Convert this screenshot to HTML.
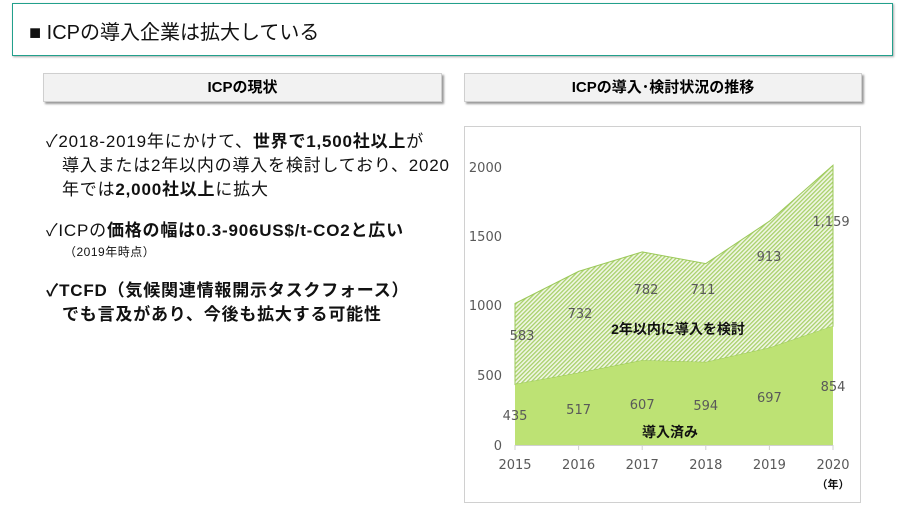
<!DOCTYPE html>
<html><head><meta charset="utf-8"><style>
body{margin:0;width:904px;height:512px;background:#fff;position:relative;overflow:hidden;font-family:"Liberation Sans","Noto Sans CJK JP",sans-serif;color:#000}
.title{position:absolute;left:12px;top:3px;width:879px;height:51px;border:1px solid #22a08c;box-shadow:1px 1px 2px #aaa}
.title span{position:absolute;left:16px;top:12px;font-size:20px;color:#111}
.hd{position:absolute;top:73px;height:27px;background:#f2f2f2;border:1px solid #cfcfcf;box-shadow:2px 2px 2px #999;font-weight:bold;font-size:15px;text-align:center;line-height:27px}
.txt{position:absolute;left:46px;font-size:17px;line-height:24px;color:#111;letter-spacing:0.8px;white-space:nowrap}
b{font-weight:bold}
</style></head><body>
<div class="title"><span>■ ICPの導入企業は拡大している</span></div>
<div class="hd" style="left:43px;width:397px">ICPの現状</div>
<div class="hd" style="left:464px;width:396px">ICPの導入･検討状況の推移</div>
<div class="txt" style="top:130px">✓2018-2019年にかけて、<b>世界で1,500社以上</b>が<br><span style="padding-left:16px">導入または2年以内の導入を検討しており、2020</span><br><span style="padding-left:16px">年では<b>2,000社以上</b>に拡大</span></div>
<div class="txt" style="top:219px">✓ICPの<b>価格の幅は0.3-906US$/t-CO2と広い</b></div>
<div class="txt" style="top:240px;font-size:12px;padding-left:18px;letter-spacing:0.5px">（2019年時点）</div>
<div class="txt" style="top:279px"><b>✓TCFD（気候関連情報開示タスクフォース）<br><span style="padding-left:16px">でも言及があり、今後も拡大する可能性</span></b></div>
<svg style="position:absolute;left:0;top:0" width="904" height="512">
<defs><pattern id="h" width="3" height="3" patternUnits="userSpaceOnUse" patternTransform="rotate(45)"><rect width="3" height="3" fill="#f0f6e4"/><rect width="1.3" height="3" fill="#a8d06a"/></pattern></defs>
<rect x="464.5" y="126.5" width="396" height="376" fill="#fff" stroke="#d0d0d0"/>
<polygon points="515,303.5 578.6,271.4 642.2,251.9 705.8,263.6 769.4,221.2 833,165.2 833,326.3 769.4,348.1 705.8,362.4 642.2,360.6 578.6,373.1 515,384.5" fill="url(#h)" stroke="#9cc95a" stroke-width="1"/>
<polygon points="515,384.5 578.6,373.1 642.2,360.6 705.8,362.4 769.4,348.1 833,326.3 833,445 515,445" fill="#bde274"/>
<line x1="515" y1="445.5" x2="833" y2="445.5" stroke="#d0d0d0"/>
<g stroke="#d0d0d0"><line x1="515" y1="445" x2="515" y2="450"/><line x1="578.6" y1="445" x2="578.6" y2="450"/><line x1="642.2" y1="445" x2="642.2" y2="450"/><line x1="705.8" y1="445" x2="705.8" y2="450"/><line x1="769.4" y1="445" x2="769.4" y2="450"/><line x1="833" y1="445" x2="833" y2="450"/></g>
<g font-family="DejaVu Sans,sans-serif" font-size="13" fill="#595959" text-anchor="end">
<text x="502" y="172">2000</text><text x="502" y="241">1500</text><text x="502" y="310">1000</text><text x="502" y="380">500</text><text x="502" y="450">0</text></g>
<g font-family="DejaVu Sans,sans-serif" font-size="13" fill="#595959" text-anchor="middle">
<text x="515" y="469">2015</text><text x="578.6" y="469">2016</text><text x="642.2" y="469">2017</text><text x="705.8" y="469">2018</text><text x="769.4" y="469">2019</text><text x="833" y="469">2020</text>
<text x="515" y="420">435</text><text x="578.6" y="414">517</text><text x="642.2" y="409">607</text><text x="705.8" y="410">594</text><text x="769.4" y="402">697</text><text x="833" y="391">854</text>
<text x="522" y="340">583</text><text x="580" y="318">732</text><text x="646" y="294">782</text><text x="703" y="294">711</text><text x="769" y="261">913</text><text x="831" y="226">1,159</text></g>
<g font-family="Liberation Sans,Noto Sans CJK JP,sans-serif" font-weight="bold" fill="#111" text-anchor="middle">
<text x="678" y="334" font-size="14">2年以内に導入を検討</text>
<text x="670" y="437" font-size="14">導入済み</text>
<text x="833" y="488" font-size="11">（年）</text></g>
</svg>
</body></html>
